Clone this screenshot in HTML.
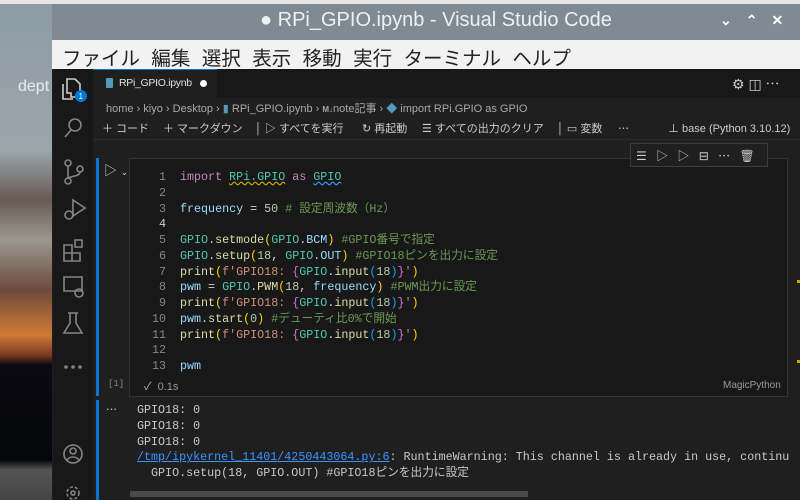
<!DOCTYPE html>
<html><head><meta charset="utf-8"><style>
*{margin:0;padding:0;box-sizing:border-box}
body{width:800px;height:500px;overflow:hidden;position:relative;background:#1f1f1f;font-family:"Liberation Sans","Noto Sans CJK JP",sans-serif}
.a{position:absolute}
.desk{left:0;top:0;width:52px;height:500px;background:linear-gradient(#8d9ba4 0,#9aa6ab 30%,#6a5a55 40%,#9b9890 48%,#6e4a3c 58%,#d07a35 67%,#7a3a20 71%,#0a0a10 73%,#05060a 92%,#555 94%,#444 100%)}
.mono{font-family:"Liberation Mono","Noto Sans CJK JP",monospace;font-size:11.7px;white-space:pre}
.ln{color:#858585;text-align:right;width:30px;left:136px}
.k{color:#c586c0}.v{color:#9cdcfe}.c{color:#4ec9b0}.g{color:#6a9955}.n{color:#b5cea8}.s{color:#ce9178}.f{color:#dcdcaa}.p1{color:#ffd700}.p2{color:#da70d6}.p3{color:#179fff}.w{color:#d4d4d4}
.tb{color:#ccc;font-size:11px;white-space:nowrap}
svg{position:absolute}
</style></head><body>
<div class="a desk"></div>
<div class="a" style="left:18px;top:78px;color:#e8ecef;font-size:16px">dept</div>
<div class="a" style="left:0;top:0;width:800px;height:4px;background:#e6e6e6"></div>
<div class="a" style="left:52px;top:4px;width:748px;height:36px;background:#7f8a92"></div>
<div class="a" style="left:260px;top:9px;color:#eef1f3;font-size:20px">● RPi_GPIO.ipynb - Visual Studio Code</div>
<div class="a" style="left:720px;top:12px;color:#fff;font-size:14px;font-weight:bold;letter-spacing:14px">⌄⌃✕</div>
<div class="a" style="left:52px;top:40px;width:748px;height:29px;background:#f2f2f2"></div>
<div class="a" style="left:62px;top:42px;color:#222;font-size:19.5px;word-spacing:6px">ファイル 編集 選択 表示 移動 実行 ターミナル ヘルプ</div>
<div class="a" style="left:53px;top:69px;width:40px;height:431px;background:#181818"></div>
<div class="a" style="left:93px;top:69px;width:707px;height:29px;background:#181818"></div>
<div class="a" style="left:93px;top:69px;width:124px;height:29px;background:#1f1f1f;border-top:1px solid #0078d4"></div>
<div class="a" style="left:106px;top:78px;width:7px;height:10px;background:#519aba;border-radius:1px"></div>
<div class="a tb" style="left:119px;top:77px;color:#e0e0e0;font-size:10.5px;letter-spacing:-0.3px">RPi_GPIO.ipynb</div>
<div class="a" style="left:200px;top:80px;width:7px;height:7px;border-radius:50%;background:#fff"></div>
<div class="a tb" style="left:732px;top:74px;font-size:14px;color:#ccc">⚙ ◫ ⋯</div>
<div class="a tb" style="left:106px;top:100px;color:#a9a9a9">home › kiyo › Desktop › <span style="color:#519aba">▮</span> RPi_GPIO.ipynb › <b style="font-size:8px">M↓</b>note記事 › <span style="color:#519aba">◆</span> import RPi.GPIO as GPIO</div>
<div class="a tb" style="left:102px;top:120px">＋ コード</div>
<div class="a tb" style="left:163px;top:120px">＋ マークダウン</div>
<div class="a tb" style="left:255px;top:120px">│ ▷ すべてを実行</div>
<div class="a tb" style="left:362px;top:120px">↻ 再起動</div>
<div class="a tb" style="left:422px;top:120px">☰ すべての出力のクリア</div>
<div class="a tb" style="left:557px;top:120px">│ ▭ 変数</div>
<div class="a tb" style="left:618px;top:120px">⋯</div>
<div class="a tb" style="left:668px;top:120px;color:#ccc">⊥ base (Python 3.10.12)</div>
<div class="a" style="left:93px;top:139px;width:707px;height:1px;background:#2b2b2b"></div>
<svg width="40" height="431" style="left:53px;top:69px" fill="none" stroke="#858585" stroke-width="1.6">
<path d="M14 10h8l5 5v13h-9v-4h-4z M10 15v15h10" stroke="#ccc"/>
<circle cx="28" cy="27" r="6" fill="#0078d4" stroke="none"/>
<text x="25.5" y="30" font-size="8" fill="#fff" stroke="none" font-family="Liberation Sans">1</text>
<circle cx="22" cy="56" r="6"/><path d="M18 61l-6 7"/>
<circle cx="15" cy="94" r="3"/><circle cx="15" cy="112" r="3"/><circle cx="27" cy="100" r="3"/><path d="M15 97v12M27 103c0 5-12 4-12 7"/>
<path d="M20 131l12 8-12 8z"/><circle cx="16" cy="146" r="4"/>
<path d="M11 176h8v8h-8zM11 184h8v8h-8zM19 184h8v8h-8zM22 171h7v7h-7z"/>
<path d="M11 208h18v14h-18z"/><circle cx="26" cy="224" r="4"/>
<path d="M17 244v10l-6 10h18l-6-10v-10M15 244h10"/>
<circle cx="13" cy="298" r="1" fill="#858585"/><circle cx="20" cy="298" r="1" fill="#858585"/><circle cx="27" cy="298" r="1" fill="#858585"/>
<circle cx="20" cy="385" r="9"/><circle cx="20" cy="382" r="3"/><path d="M14 391c3-4 9-4 12 0"/>
<circle cx="20" cy="424" r="6" stroke-dasharray="3 2"/><circle cx="20" cy="424" r="2"/>
</svg>
<div class="a" style="left:96px;top:158px;width:3px;height:238px;background:#0078d4"></div>
<div class="a" style="left:96px;top:400px;width:3px;height:100px;background:#0078d4"></div>
<div class="a" style="left:104px;top:160px;color:#ccc;font-size:13px">▷ <span style="font-size:9px">⌄</span></div>
<div class="a" style="left:129px;top:158px;width:659px;height:239px;background:#181818;border:1px solid #333"></div>
<div class="a" style="left:630px;top:143px;width:138px;height:24px;background:#1f1f1f;border:1px solid #3c3c3c"></div>
<div class="a tb" style="left:636px;top:147px;font-size:12px;color:#ccc;letter-spacing:3px">☰ ▷ ▷ ⊟ ⋯ 🗑</div>
<div class="a mono ln" style="top:170px;line-height:15.75px">1
2
3
<span style="color:#ccc">4</span>
5
6
7
8
9
10
11
12
13</div>
<div class="a mono w" style="left:180px;top:170px;line-height:15.75px"><span class="k">import</span> <span class="c" style="text-decoration:underline wavy #cca700">RPi.GPIO</span> <span class="k">as</span> <span class="c" style="text-decoration:underline wavy #3794ff">GPIO</span>

<span class="v">frequency</span> = <span class="n">50</span> <span class="g"># 設定周波数（Hz）</span>

<span class="c">GPIO</span>.<span class="f">setmode</span><span class="p1">(</span><span class="c">GPIO</span>.<span class="v">BCM</span><span class="p1">)</span> <span class="g">#GPIO番号で指定</span>
<span class="c">GPIO</span>.<span class="f">setup</span><span class="p1">(</span><span class="n">18</span>, <span class="c">GPIO</span>.<span class="v">OUT</span><span class="p1">)</span> <span class="g">#GPIO18ピンを出力に設定</span>
<span class="f">print</span><span class="p1">(</span><span class="s">f'GPIO18: </span><span class="p2">{</span><span class="c">GPIO</span>.<span class="f">input</span><span class="p3">(</span><span class="n">18</span><span class="p3">)</span><span class="p2">}</span><span class="s">'</span><span class="p1">)</span>
<span class="v">pwm</span> = <span class="c">GPIO</span>.<span class="f">PWM</span><span class="p1">(</span><span class="n">18</span>, <span class="v">frequency</span><span class="p1">)</span> <span class="g">#PWM出力に設定</span>
<span class="f">print</span><span class="p1">(</span><span class="s">f'GPIO18: </span><span class="p2">{</span><span class="c">GPIO</span>.<span class="f">input</span><span class="p3">(</span><span class="n">18</span><span class="p3">)</span><span class="p2">}</span><span class="s">'</span><span class="p1">)</span>
<span class="v">pwm</span>.<span class="f">start</span><span class="p1">(</span><span class="n">0</span><span class="p1">)</span> <span class="g">#デューティ比0%で開始</span>
<span class="f">print</span><span class="p1">(</span><span class="s">f'GPIO18: </span><span class="p2">{</span><span class="c">GPIO</span>.<span class="f">input</span><span class="p3">(</span><span class="n">18</span><span class="p3">)</span><span class="p2">}</span><span class="s">'</span><span class="p1">)</span>

<span class="v">pwm</span></div>
<div class="a mono" style="left:108px;top:379px;color:#858585;font-size:9px">[1]</div>
<div class="a tb" style="left:144px;top:378px;color:#999"><span style="color:#89d185">✓</span>&nbsp; 0.1s</div>
<div class="a tb" style="left:723px;top:380px;color:#999;font-size:10px">MagicPython</div>
<div class="a tb" style="left:106px;top:401px;color:#ccc">⋯</div>
<div class="a mono" style="left:137px;top:403px;line-height:15.8px;color:#c8c8c8">GPIO18: 0
GPIO18: 0
GPIO18: 0
<span style="color:#3794ff;text-decoration:underline">/tmp/ipykernel_11401/4250443064.py:6</span>: RuntimeWarning: This channel is already in use, continu
  GPIO.setup(18, GPIO.OUT) #GPIO18ピンを出力に設定</div>
<div class="a" style="left:130px;top:491px;width:398px;height:6px;background:#4a4a4a"></div>
<div class="a" style="left:797px;top:280px;width:3px;height:3px;background:#cca700"></div>
<div class="a" style="left:797px;top:360px;width:3px;height:3px;background:#cca700"></div>
</body></html>
